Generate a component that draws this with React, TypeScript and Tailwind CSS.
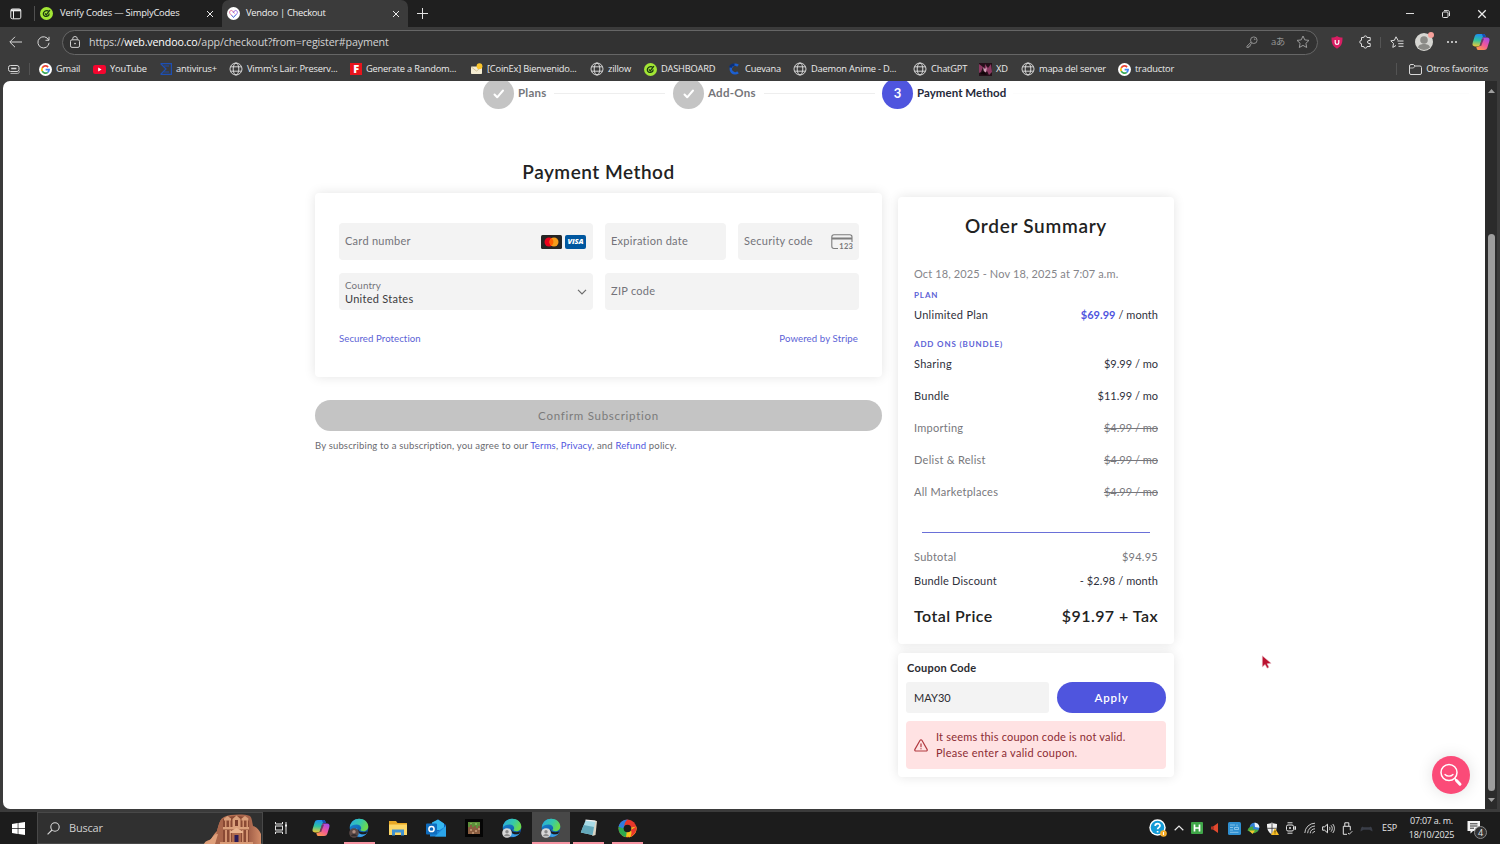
import type { ReactNode } from "react";
import clsx from "clsx";

const uiFont = "font-['Open_Sans','Noto_Sans',sans-serif]";
const pageFont = "font-['Lato',sans-serif]";

interface IconProps {
  className?: string;
}

function GlobeIcon() {
  return (
    <svg className="size-[14px] shrink-0" viewBox="0 0 14 14" fill="none" stroke="#e4e4e4" strokeWidth="0.9">
      <circle cx="7" cy="7" r="6" />
      <ellipse cx="7" cy="7" rx="2.8" ry="6" />
      <path d="M1.6 4.8h10.8M1.6 9.2h10.8" />
    </svg>
  );
}

function GoogleIcon() {
  return (
    <svg className="size-[13px] shrink-0" viewBox="0 0 13 13" fill="none">
      <circle cx="6.5" cy="6.5" r="6.5" fill="#fff" />
      <g strokeWidth="1.7">
        <path d="M9.1 4.1A3.6 3.6 0 0 0 3.3 4.8" stroke="#ea4335" />
        <path d="M3.3 4.8a3.6 3.6 0 0 0 0 3.4" stroke="#fbbc05" />
        <path d="M3.3 8.2a3.6 3.6 0 0 0 5.5 1.1" stroke="#34a853" />
        <path d="M8.8 9.3a3.6 3.6 0 0 0 1.3-2.6H6.6" stroke="#4285f4" />
      </g>
    </svg>
  );
}

function SimplyIcon() {
  return (
    <svg className="size-[13px] shrink-0" viewBox="0 0 13 13">
      <circle cx="6.5" cy="6.5" r="6.5" fill="#a3e635" />
      <path d="M9.9 3.2 6.3 7.8 4.9 6.5M8.4 3.9C5.6 3 3.2 4.6 3.3 7c.1 2 2.3 2.8 4 2.2 1.4-.5 1.9-1.5 1.9-2.7" fill="none" stroke="#1c3a12" strokeWidth="1.3" />
    </svg>
  );
}

function EdgeIcon() {
  return (
    <svg className="size-[20px]" viewBox="0 0 20 20">
      <defs>
        <linearGradient id="edgeTop" x1="0" y1="0" x2="1" y2="0.4">
          <stop offset="0" stopColor="#2aa8e8" />
          <stop offset="0.6" stopColor="#36c9a8" />
          <stop offset="1" stopColor="#6bd94c" />
        </linearGradient>
        <linearGradient id="edgeSide" x1="0" y1="0" x2="0.6" y2="1">
          <stop offset="0" stopColor="#1c8fdc" />
          <stop offset="1" stopColor="#0c4f9e" />
        </linearGradient>
      </defs>
      <circle cx="10" cy="10" r="9.3" fill="url(#edgeSide)" />
      <path d="M.8 9.2C1.5 4 5.3.7 10.2.7c5.2 0 9.1 3.5 9.1 7.7 0 3-2.3 4.8-5 4.8-1.8 0-2.9-.5-2.9-1.2 0-.6.8-.9.8-2.1 0-1.9-2-3.5-4.600-3.500C4.500 6.400 2 7.600.8 9.200z" fill="url(#edgeTop)" />
      <path d="M8.200 10c-.9 4.200 2.200 6.700 6 6.300 1.500-.1 2.800-.7 3.800-1.500-2.200 4.400-8 5.300-11.200 2.400C4.500 14.800 5.200 11.300 8.200 10z" fill="#3b9fe6" />
      <path d="M9 11c.3 2.800 4.200 4.300 9.200 2.600l-1.200 2.200c-4.500 1.700-8.600-.8-8-4.800z" fill="#1c1c1c" />
    </svg>
  );
}

function EdgeProfileIcon({ dark }: { dark?: boolean }) {
  return (
    <div className="relative">
      <EdgeIcon />
      <svg className="absolute bottom-0 left-0 size-[10px]" viewBox="0 0 10 10">
        <circle cx="5" cy="5" r="4.8" fill={dark ? "#5b4a48" : "#d8d8d8"} />
        <circle cx="5" cy="3.8" r="1.7" fill={dark ? "#b08d80" : "#8a8a8a"} />
        <path d="M2 8.2c.4-3 5.600-3 6 0z" fill={dark ? "#322c2e" : "#8a8a8a"} />
      </svg>
    </div>
  );
}

function CopilotIcon({ className }: IconProps) {
  return (
    <svg className={className} viewBox="0 0 20 20">
      <defs>
        <linearGradient id="copLeft" x1="0.3" y1="0" x2="0.2" y2="1">
          <stop offset="0" stopColor="#1d8df0" />
          <stop offset="0.5" stopColor="#2fc3a0" />
          <stop offset="1" stopColor="#f4c934" />
        </linearGradient>
        <linearGradient id="copRight" x1="0.8" y1="0" x2="0.2" y2="1">
          <stop offset="0" stopColor="#a54bea" />
          <stop offset="0.5" stopColor="#f0569b" />
          <stop offset="1" stopColor="#ff9a4a" />
        </linearGradient>
      </defs>
      <path d="M6.5 1h6.200c1 0 1.700.6 2 1.600l.5 1.900h-1.500c-1.500 0-2.300.7-2.700 2.100L9 13.200c-.4 1.100-1.100 1.700-2.200 1.700H3.300C1 14.900.1 13.500.7 11.200L2.900 3.800C3.500 1.900 4.600 1 6.500 1z" fill="url(#copLeft)" />
      <path d="M12.700 1c1 0 1.700.6 2 1.600l.5 1.900h-2.900L11 1z" fill="#174fb5" />
      <path d="M13.500 19H7.300c-1 0-1.700-.6-2-1.600l-.5-1.900h1.500c1.500 0 2.300-.7 2.700-2.100L11 6.800c.4-1.100 1.100-1.700 2.200-1.700h3.500c2.300 0 3.200 1.400 2.600 3.700l-2.200 7.400c-.6 1.900-1.700 2.800-3.600 2.800z" fill="url(#copRight)" />
      <path d="M11.300 6.200 13.400 6l-3.200 8.500H8.200z" fill="#2a2c3a" opacity="0.600" />
    </svg>
  );
}

function CloseIcon({ className = "size-[8px]" }: IconProps) {
  return (
    <svg className={className} viewBox="0 0 8 8" stroke="#ececec" strokeWidth="1">
      <path d="M1 1l6 6M7 1L1 7" />
    </svg>
  );
}

const bookmarks: { label: string; width: string; gap?: string; icon: ReactNode }[] = [
  { label: "Gmail", width: "w-[54px]", icon: <GoogleIcon /> },
  {
    label: "YouTube",
    width: "w-[67px]",
    icon: (
      <svg className="h-[9px] w-[13px] shrink-0" viewBox="0 0 13 9">
        <rect width="13" height="9" rx="2.2" fill="#f5062f" />
        <path d="M5.2 2.500v4l3.400-2z" fill="#fff" />
      </svg>
    ),
  },
  {
    label: "antivirus+",
    width: "w-[69px]",
    icon: (
      <svg className="size-[12px] shrink-0" viewBox="0 0 12 12" fill="none" stroke="#1d4fb4">
        <path d="M.6.6h10.800v10.800H.6M.6.6 6 6 .6 11.400" strokeWidth="1.200" />
        <path d="M3.500 3H9M3.500 9H9" strokeWidth="0.900" />
      </svg>
    ),
  },
  { label: "Vimm's Lair: Preserv...", width: "w-[121px]", icon: <GlobeIcon /> },
  {
    label: "Generate a Random...",
    width: "w-[121px]",
    icon: <span className="flex size-[12px] shrink-0 items-center justify-center bg-[#e8141c] text-[11px] font-extrabold text-white">F</span>,
  },
  {
    label: "[CoinEx] Bienvenido...",
    width: "w-[119px]",
    icon: (
      <svg className="size-[12px] shrink-0" viewBox="0 0 12 12">
        <rect y="3.500" width="11" height="7.500" rx="0.800" fill="#f4ecd2" />
        <path d="M.3 4l5.200 4 5.200-4" fill="none" stroke="#c9b98c" strokeWidth="0.800" />
        <circle cx="8.500" cy="3.200" r="2.900" fill="#fbc52b" />
      </svg>
    ),
  },
  { label: "zillow", width: "w-[54px]", icon: <GlobeIcon /> },
  { label: "DASHBOARD", width: "w-[84px]", icon: <SimplyIcon /> },
  {
    label: "Cuevana",
    width: "w-[65px]",
    gap: "gap-[5px]",
    icon: (
      <svg className="size-[12px] shrink-0" viewBox="0 0 12 12" fill="none">
        <path d="M10 2.800A4.300 4.300 0 1 0 10 9.200" stroke="#1c5fd0" strokeWidth="2.600" />
        <path d="M2.200 4.500A4.300 4.300 0 0 1 6.500 1.700" stroke="#0b2f78" strokeWidth="2.600" />
      </svg>
    ),
  },
  { label: "Daemon Anime - D...", width: "w-[120px]", icon: <GlobeIcon /> },
  { label: "ChatGPT", width: "w-[66px]", icon: <GlobeIcon /> },
  {
    label: "XD",
    width: "w-[42px]",
    icon: (
      <svg className="size-[13px] shrink-0" viewBox="0 0 13 13">
        <rect width="13" height="13" fill="#241019" />
        <path d="M0 1l4 3-2 5-2 1zM6 1l3 4 3-4 1 8-3 3-2-4-3 3z" fill="#8d3a63" />
        <path d="M4 4l2 2 2-2-1 5H5z" fill="#cfa3b8" />
        <path d="M1 11l4-3 3 4z" fill="#120509" />
      </svg>
    ),
  },
  { label: "mapa del server", width: "w-[97px]", icon: <GlobeIcon /> },
  { label: "traductor", width: "w-[60px]", icon: <GoogleIcon /> },
];

function TabBar() {
  return (
    <div className="flex h-[27px] items-center bg-[#1f1f1f] text-[9.400px] whitespace-nowrap text-[#efefef]">
      <div className="flex h-full w-[34px] items-center pl-[10px]">
        <svg className="size-[12px]" viewBox="0 0 12 12" fill="none" stroke="#eee">
          <rect x="0.800" y="1" width="10" height="9.800" rx="1.600" />
          <path d="M1 2.300h9.800" strokeWidth="2" />
          <path d="M3.500 3v7.500" />
        </svg>
      </div>
      <div className="flex h-full w-[188px] items-center">
        <div className="h-[15px] w-px bg-[#505050]" />
        <div className="ml-[5px]">
          <SimplyIcon />
        </div>
        <span className="ml-[7px] w-[146px] tracking-[-0.200px]">Verify Codes — SimplyCodes</span>
        <CloseIcon />
      </div>
      <div className="flex h-full w-[186px] items-center rounded-t-[7px] bg-[#3b3b3b] pl-[5px]">
        <svg className="size-[13px]" viewBox="0 0 13 13" fill="none">
          <circle cx="6.500" cy="6.500" r="6.500" fill="#fff" />
          <path d="M6.500 10.500 3 6.500C1.700 4.800 3.800 2.300 5.600 4L7.500 6.500" stroke="#e0709a" strokeWidth="1" />
          <path d="M6.500 10.500 10 6.500c1.300-1.700-.8-4.200-2.600-2.500L6 6" stroke="#9a6be0" strokeWidth="1" />
          <path d="M4.500 8.200 6.500 10.500 9 7.600" stroke="#5a8be8" strokeWidth="1" />
        </svg>
        <span className="ml-[6px] w-[146px] tracking-[-0.300px]">Vendoo | Checkout</span>
        <CloseIcon />
      </div>
      <svg className="ml-[9px] size-[11px]" viewBox="0 0 11 11" stroke="#e2e2e2">
        <path d="M0 5.500h11M5.500 0v11" />
      </svg>
      <div className="ml-auto flex items-center pr-[13px]">
        <div className="h-px w-[8px] bg-[#dcdcdc]" />
        <svg className="ml-[28px] size-[8px]" viewBox="0 0 8 8" fill="none" stroke="#e4e4e4">
          <rect x="0.500" y="2" width="5.500" height="5.500" rx="1" />
          <path d="M2 .6h3.800c1 0 1.700.7 1.700 1.700V6" />
        </svg>
        <CloseIcon className="ml-[27px] size-[10px]" />
      </div>
    </div>
  );
}

function Toolbar() {
  return (
    <div className="flex h-[30px] items-center bg-[#3b3b3b]">
      <svg className="ml-[9px] h-[12px] w-[13px]" viewBox="0 0 13 12" fill="none" stroke="#d8d8d8">
        <path d="M13 6H1M6 .8.800 6 6 11.200" />
      </svg>
      <svg className="ml-[15px] size-[13px]" viewBox="0 0 13 13" fill="none" stroke="#d8d8d8">
        <path d="M11.600 4A5.600 5.600 0 1 0 12.100 6.800M12 .8v3.500H8.500" />
      </svg>
      <div className="ml-[12px] flex h-[25px] w-[1256px] items-center rounded-full border border-[#666] bg-[#323232]">
        <svg className="ml-[7px] h-[12px] w-[10px]" viewBox="0 0 10 12" fill="none" stroke="#cfcfcf">
          <rect x="0.500" y="3.800" width="9" height="7.600" rx="1.500" />
          <path d="M2.700 3.500V2.800a2.300 2.300 0 0 1 4.600 0v.7" />
          <circle cx="5" cy="7.600" r="0.500" fill="#cfcfcf" />
        </svg>
        <span className="ml-[9px] whitespace-nowrap text-[10.700px] tracking-[-0.150px] text-[#d2d2d2]">
          https://<span className="text-white">web.vendoo.co</span>/app/checkout?from=register#payment
        </span>
        <svg className="ml-auto size-[12px]" viewBox="0 0 12 12" fill="none" stroke="#9a9a9a" strokeWidth="0.900" strokeLinejoin="round">
          <circle cx="7.800" cy="4.200" r="3.300" />
          <path d="M5 6.200.9 10.200v1.200h1.900v-1.200h1.400V9l1.800-1.800" />
          <circle cx="8.800" cy="3.200" r="0.400" />
        </svg>
        <span className="ml-[13px] w-[14px] text-[9.500px] tracking-[-0.500px] text-[#969696] font-['Open_Sans','Noto_Sans_CJK_JP',sans-serif]">aあ</span>
        <svg className="mr-[7px] ml-[11px] size-[14px]" viewBox="0 0 14 14" fill="none" stroke="#9a9a9a" strokeLinejoin="round">
          <path d="M7 1l1.800 3.900 4.200.500-3.100 2.900.8 4.200L7 10.400l-3.700 2.100.8-4.200L1 5.400l4.200-.500z" />
        </svg>
      </div>
      <svg className="ml-[13px] h-[13px] w-[12px]" viewBox="0 0 12 13">
        <path d="M6 0c1.500 1.200 3.500 1.600 5.500 1.600 0 5-.5 8.400-5.500 11.200C1 10 .5 6.600.5 1.600 2.500 1.600 4.500 1.200 6 0z" fill="#d81e63" />
        <path d="M4.200 4v2.700c0 2.300 3.600 2.300 3.600 0V4" fill="none" stroke="#fff" strokeWidth="1.200" />
      </svg>
      <svg className="ml-[15px] size-[14px]" viewBox="0 0 14 14" fill="none" stroke="#dedede" strokeLinejoin="round">
        <path d="M3.500 2.500h2.300a1.600 1.600 0 0 1 3.200 0h3.200v3H11a1.500 1.500 0 0 0 0 3h1.200v3H9a1.600 1.600 0 0 1-3.200 0H3.500V8.700a1.700 1.700 0 0 1 0-3.400z" />
      </svg>
      <div className="ml-[8px] h-[11px] w-px bg-[#555]" />
      <svg className="ml-[9px] h-[13px] w-[14px]" viewBox="0 0 14 13" fill="none" stroke="#dedede" strokeLinejoin="round">
        <path d="M8 4.300 6 .8 4.400 4.300.800 4.800l2.700 2.600-.7 4L6 9.500M7.500 5h6M8.200 7.700h5.300M8.500 10.300h5" />
      </svg>
      <div className="relative ml-[11px] flex size-[18px] items-center justify-center rounded-full bg-[#d6d6d2]">
        <svg className="size-[18px]" viewBox="0 0 18 18" fill="#8a8a86">
          <circle cx="9" cy="7" r="3.800" />
          <path d="M3 14.500c.5-4.600 11.500-4.600 12 0A8.500 8.500 0 0 1 3 14.500z" />
        </svg>
        <div className="absolute -top-px -right-px size-[6px] rounded-full bg-[#f7a19b]" />
      </div>
      <div className="ml-[14px] flex gap-[2px]">
        <i className="size-[2px] rounded-full bg-[#e8e8e8]" />
        <i className="size-[2px] rounded-full bg-[#e8e8e8]" />
        <i className="size-[2px] rounded-full bg-[#e8e8e8]" />
      </div>
      <CopilotIcon className="ml-[15px] size-[18px] shrink-0" />
    </div>
  );
}

function BookmarksBar() {
  return (
    <div className="flex h-[24px] items-center bg-[#3b3b3b] text-[9.300px] tracking-[-0.200px] whitespace-nowrap text-[#ebebeb]">
      <svg className="ml-[8px] h-[9px] w-[12px]" viewBox="0 0 12 9" fill="none" stroke="#d8d8d8">
        <rect x="0.500" y="0.500" width="10.500" height="6" rx="2" />
        <path d="M3.200 3.500h5.200" strokeWidth="1.600" />
        <path d="M2.500 8.400h7c1.200 0 2-1 2-2" strokeWidth="0.800" />
      </svg>
      <div className="mr-[9px] ml-[9px] h-[12px] w-px bg-[#535353]" />
      {bookmarks.map((b) => (
        <div key={b.label} className={clsx("flex shrink-0 items-center", b.gap ?? "gap-[4px]", b.width)}>
          {b.icon}
          <span>{b.label}</span>
        </div>
      ))}
      <div className="ml-auto h-[12px] w-px bg-[#535353]" />
      <svg className="ml-[12px] h-[11px] w-[13px]" viewBox="0 0 13 11" fill="none" stroke="#d8d8d8">
        <path d="M.5 2A1.500 1.500 0 0 1 2 .5h2.500l1.500 1.500H11A1.500 1.500 0 0 1 12.500 3.500V9A1.500 1.500 0 0 1 11 10.500H2A1.500 1.500 0 0 1 .5 9z" />
        <path d="M.5 4h4l1.500-2" strokeWidth="0.800" />
      </svg>
      <span className="mr-[12px] ml-[4px]">Otros favoritos</span>
    </div>
  );
}

function StepDone() {
  return (
    <div className="flex size-[31px] shrink-0 items-center justify-center rounded-full bg-[#c4c4c4]">
      <svg className="h-[10px] w-[12px]" viewBox="0 0 12 10" fill="none" stroke="#fff" strokeWidth="2" strokeLinecap="round" strokeLinejoin="round">
        <path d="M1.500 5.500 4.200 8.300 10 1.500" />
      </svg>
    </div>
  );
}

function Stepper() {
  return (
    <div className="-mt-[3px] flex h-[31px] items-center pl-[480px] text-[11.500px] font-bold whitespace-nowrap text-[#75757a]">
      <StepDone />
      <span className="-mt-px ml-[4px] w-[36px] tracking-[0.250px]">Plans</span>
      <div className="h-px w-[111px] bg-[#eeeeee]" />
      <div className="ml-[8px]">
        <StepDone />
      </div>
      <span className="-mt-px ml-[4px] w-[56px] tracking-[0.250px]">Add-Ons</span>
      <div className="h-px w-[111px] bg-[#eeeeee]" />
      <div className="ml-[7px] flex size-[31px] shrink-0 items-center justify-center rounded-full bg-[#4f55de] text-[13px] text-white">3</div>
      <span className="-mt-px ml-[4px] w-[96px] tracking-[0.050px] text-[#25293a]">Payment Method</span>
      <div className="h-px w-[456px] bg-[#fcfcfc]" />
    </div>
  );
}

const field = "flex h-[37px] shrink-0 items-center rounded-[4px] bg-[#f3f3f3] px-[6px] text-[11px] tracking-[0.270px] text-[#73737a]";

function PaymentForm() {
  return (
    <div className="w-[567px]">
      <h1 className="mt-[49px] h-[29px] text-center text-[19px] leading-[28px] font-semibold tracking-[0.500px] text-[#222]">Payment Method</h1>
      <div className="mt-[6px] h-[184px] rounded-[4px] bg-white pt-[30px] pr-[23px] pl-[24px] shadow-[0_0_12px_rgba(0,0,0,0.11)]">
        <div className="flex gap-[12px]">
          <div className={clsx(field, "w-[254px]")}>
            <span>Card number</span>
            <div className="mr-px ml-auto flex gap-[3px]">
              <svg className="h-[14px] w-[21px]" viewBox="0 0 21 14">
                <rect width="21" height="14" rx="1.500" fill="#252525" />
                <circle cx="8" cy="7" r="4.500" fill="#eb001b" />
                <circle cx="13" cy="7" r="4.500" fill="#f79e1b" />
                <path d="M10.500 3.300a4.500 4.500 0 0 1 0 7.400 4.500 4.500 0 0 1 0-7.400z" fill="#ff5f00" />
              </svg>
              <span className="flex h-[14px] w-[21px] items-center justify-center rounded-[2px] bg-[#00579f] text-[7.500px] font-black italic tracking-[-0.100px] text-white font-['Open_Sans',sans-serif]">
                VISA
              </span>
            </div>
          </div>
          <div className={clsx(field, "w-[121px]")}>Expiration date</div>
          <div className={clsx(field, "w-[121px]")}>
            <span className="whitespace-nowrap">Security code</span>
            <div className="relative ml-auto h-[16px] w-[22px]">
              <svg className="h-[16px] w-[22px]" viewBox="0 0 22 16" fill="none" stroke="#7d7d7d">
                <path d="M7 14.500H3A2.200 2.200 0 0 1 .8 12.300V3A2.200 2.200 0 0 1 3 .8h15.800A2.200 2.200 0 0 1 21 3v5" strokeWidth="1.100" />
                <path d="M.8 4.600H21" strokeWidth="2" />
              </svg>
              <span className="absolute right-0 -bottom-[1px] text-[7.500px] leading-[8px] font-bold tracking-[0.200px] text-[#777]">123</span>
            </div>
          </div>
        </div>
        <div className="mt-[13px] flex gap-[12px]">
          <div className={clsx(field, "w-[254px] justify-between")}>
            <div className="flex flex-col leading-[13px]">
              <span className="text-[9.800px] tracking-[0.150px]">Country</span>
              <span className="text-[#3c3c40]">United States</span>
            </div>
            <svg className="h-[6px] w-[10px]" viewBox="0 0 10 6" fill="none" stroke="#6c6c6c" strokeWidth="1.200">
              <path d="M1 .8l4 4 4-4" />
            </svg>
          </div>
          <div className={clsx(field, "w-[254px]")}>ZIP code</div>
        </div>
        <div className="mt-[22px] flex justify-between pr-px text-[9.600px] leading-[14px] tracking-[0.120px] text-[#5c62d6]">
          <span className="tracking-[0.080px]">Secured Protection</span>
          <span>Powered by Stripe</span>
        </div>
      </div>
      <button className="mt-[23px] flex h-[31px] w-full items-center justify-center rounded-full bg-[#c4c4c4] text-[11.500px] tracking-[0.720px] text-[#7b7b7b]">
        Confirm Subscription
      </button>
      <p className="mt-[8px] text-[9.500px] leading-[14px] tracking-[0.170px] whitespace-nowrap text-[#6a6a6f]">
        By subscribing to a subscription, you agree to our <a className="text-[#4f55de]">Terms</a>, <a className="text-[#4f55de]">Privacy</a>, and{" "}
        <a className="text-[#4f55de]">Refund</a> policy.
      </p>
    </div>
  );
}

const addOns = [
  { name: "Sharing", price: "$9.99 / mo", included: false },
  { name: "Bundle", price: "$11.99 / mo", included: false },
  { name: "Importing", price: "$4.99 / mo", included: true },
  { name: "Delist & Relist", price: "$4.99 / mo", included: true },
  { name: "All Marketplaces", price: "$4.99 / mo", included: true },
];

function OrderSummary() {
  return (
    <div className="mt-[88px] ml-[16px] w-[276px]">
      <div className="h-[447px] rounded-[4px] bg-white px-[16px] text-[11px] leading-[20px] tracking-[0.270px] text-[#2f313c] shadow-[0_0_12px_rgba(0,0,0,0.11)]">
        <h2 className="h-[58px] text-center text-[19px] leading-[57px] font-semibold tracking-[0.700px] text-[#222]">Order Summary</h2>
        <div className="mt-[9px] tracking-[0.120px] text-[#85858a]">Oct 18, 2025 - Nov 18, 2025 at 7:07 a.m.</div>
        <div className="mt-px text-[8px] font-bold tracking-[0.900px] text-[#5c62d6]">PLAN</div>
        <div className="flex justify-between">
          <span>Unlimited Plan</span>
          <span className="tracking-[0.050px]">
            <b className="text-[#4f55de]">$69.99</b> / month
          </span>
        </div>
        <div className="mt-[9px] text-[8px] font-bold tracking-[0.860px] text-[#5c62d6]">ADD ONS (BUNDLE)</div>
        <div className="flex flex-col gap-[12px]">
          {addOns.map((a) => (
            <div key={a.name} className={clsx("flex justify-between", a.included && "text-[#77777c]")}>
              <span>{a.name}</span>
              <span className={clsx(a.included && "line-through", "tracking-[0.010px]")}>{a.price}</span>
            </div>
          ))}
        </div>
        <div className="mx-[8px] mt-[30px] h-px bg-[#6a70d8]" />
        <div className="mt-[14px] flex justify-between text-[#77777c]">
          <span>Subtotal</span>
          <span>$94.95</span>
        </div>
        <div className="mt-[4px] flex justify-between">
          <span className="tracking-[0.200px]">Bundle Discount</span>
          <span className="tracking-[0.080px]">- $2.98 / month</span>
        </div>
        <div className="mt-[10px] flex justify-between text-[16px] leading-[30px] font-semibold tracking-[0.450px] text-[#222]">
          <span>Total Price</span>
          <span>$91.97 + Tax</span>
        </div>
      </div>
      <div className="mt-[9px] h-[124px] rounded-[4px] bg-white px-[8px] pt-[5px] shadow-[0_0_12px_rgba(0,0,0,0.11)]">
        <div className="pl-px text-[11px] leading-[20px] font-bold tracking-[0.250px] text-[#2b2b31]">Coupon Code</div>
        <div className="mt-[4px] flex gap-[8px]">
          <div className="flex h-[31px] w-[143px] items-center rounded-[3px] bg-[#f3f3f3] pt-px pl-[8px] text-[11px] tracking-[0.050px] text-[#2b2b30]">MAY30</div>
          <button className="h-[31px] w-[109px] rounded-full bg-[#4f55de] text-[11.500px] font-semibold tracking-[0.900px] text-white">Apply</button>
        </div>
        <div className="mt-[8px] flex h-[48px] items-center rounded-[4px] bg-[#ffe2e3] pl-[8px] text-[11px] leading-[16px] tracking-[0.190px] text-[#8c2c33]">
          <svg className="mr-[8px] h-[13px] w-[14px]" viewBox="0 0 14 13" fill="none" stroke="#b23a41" strokeWidth="1.200" strokeLinejoin="round" strokeLinecap="round">
            <path d="M6.100 1.300.9 10.400c-.4.700.1 1.600.9 1.600h10.400c.8 0 1.300-.9.9-1.600L7.900 1.300c-.4-.7-1.400-.7-1.800 0zM7 4.800v2.900M7 9.700v.1" />
          </svg>
          <div>
            <p>It seems this coupon code is not valid.</p>
            <p className="tracking-[0.270px]">Please enter a valid coupon.</p>
          </div>
        </div>
      </div>
    </div>
  );
}

function Scrollbar() {
  return (
    <div className="flex w-[12px] flex-col items-center bg-[#2b2b2b]">
      <svg className="mt-[8px] h-[4px] w-[7px]" viewBox="0 0 7 4">
        <path d="M3.500 0 7 4H0z" fill="#a0a0a0" />
      </svg>
      <div className="mt-[141px] h-[557px] w-[7px] rounded-full bg-[#9d9d9d]" />
      <svg className="mt-[7px] h-[4px] w-[7px]" viewBox="0 0 7 4">
        <path d="M3.500 4 7 0H0z" fill="#a0a0a0" />
      </svg>
    </div>
  );
}

const tasks: { id: string; icon: ReactNode; state?: "open" | "active" }[] = [
  { id: "copilot", icon: <CopilotIcon className="size-[18px]" /> },
  { id: "edge-1", icon: <EdgeProfileIcon dark />, state: "open" },
  {
    id: "explorer",
    icon: (
      <svg className="h-[16px] w-[18px]" viewBox="0 0 18 16">
        <path d="M0 1h7l1.500 2H18v12H0z" fill="#e8a825" />
        <path d="M0 4.500h18V15H0z" fill="#fcd768" />
        <path d="M3 15.500V9.500h12v6h-3v-3H6v3z" fill="#3f92d2" />
      </svg>
    ),
  },
  {
    id: "outlook",
    icon: (
      <svg className="h-[18px] w-[20px]" viewBox="0 0 20 18">
        <path d="M4 6l8-5.500L20 6v11H4z" fill="#1160b7" />
        <path d="M6 3.500 12 .500l6 4V11H6z" fill="#35b8f1" />
        <path d="M4 7l8 5 8-5v10.500H4z" fill="#1a84d8" />
        <path d="M20 7v10.500H9z" fill="#2ba5ea" />
        <rect y="4.500" width="11" height="11" rx="1" fill="#0f6cbd" />
        <circle cx="5.500" cy="10" r="2.600" fill="none" stroke="#fff" strokeWidth="1.500" />
      </svg>
    ),
  },
  {
    id: "minecraft",
    icon: (
      <svg className="size-[18px]" viewBox="0 0 18 18">
        <rect width="18" height="18" fill="#050505" />
        <rect x="3" y="3" width="12" height="12" fill="#8a5d40" />
        <path d="M3 3h12v4h-2v2h-2V7H9v1H7V6H5v2H3z" fill="#5d8f3a" />
        <path d="M5 10h2v2H5zM10 11h2v2h-2zM13 9h2v2h-2zM7 13h2v2H7z" fill="#b98d6c" />
        <path d="M5 4h2v1H5zM10 4h2v2h-2z" fill="#7fb356" />
      </svg>
    ),
  },
  { id: "edge-2", icon: <EdgeProfileIcon /> },
  { id: "edge-3", icon: <EdgeProfileIcon />, state: "active" },
  {
    id: "notepad",
    icon: (
      <svg className="h-[18px] w-[18px]" viewBox="0 0 18 18">
        <path d="M6 1l11 1-1.500 14-3 1z" fill="#d9d4c4" />
        <path d="M5.500 1.500 15.500 2.500 12.500 16 .8 13.500z" fill="#a9dbe6" />
        <path d="M3.600 6 14 8l-1.500 8L.8 13.500z" fill="#64a9bb" />
        <path d="M5.500 1.200l10 1" stroke="#f2f2f2" strokeWidth="1.200" />
      </svg>
    ),
    state: "open",
  },
  {
    id: "swirl",
    icon: (
      <svg className="size-[19px]" viewBox="0 0 19 19">
        <circle cx="9.500" cy="9.500" r="9" fill="#e8372c" />
        <path d="M9.500 9.500 18.300 7.500A9 9 0 0 1 11 18.400z" fill="#f7c21b" />
        <path d="M18.300 7.500c.8 4-1.500 8.500-6 10.500 1.500-3 1.500-5.500.5-7z" fill="#e8372c" />
        <path d="M13 16.800A9 9 0 0 1 4 16.600l5.500-7z" fill="#f7c21b" />
        <path d="M8 18.300A9 9 0 0 1 .8 7l4-.5 4 6z" fill="#2daa4e" />
        <path d="M.6 8C1.200 3.500 5 .5 9.800.5 7 2.500 6 5 6.500 8l-2 1.500C3.500 8.500 2 8 .6 8z" fill="#2f7de1" />
        <circle cx="9.500" cy="9.500" r="3.800" fill="#1c1c1c" />
      </svg>
    ),
    state: "open",
  },
];

const trayIcons: { id: string; width: string; icon: ReactNode }[] = [
  {
    id: "help",
    width: "w-[24px]",
    icon: (
      <svg className="size-[18px]" viewBox="0 0 18 18">
        <circle cx="8.500" cy="8.500" r="8.200" fill="#fff" />
        <circle cx="8.500" cy="8.500" r="6.800" fill="#149bd7" />
        <path d="M6.200 7c0-3.200 4.800-3.100 4.800-.3 0 1.700-2.400 1.700-2.400 3.600M8.600 12v1.500" fill="none" stroke="#fff" strokeWidth="1.700" />
        <circle cx="14.500" cy="14.500" r="3.300" fill="#f4ae2c" />
        <path d="M14.500 13v3" stroke="#fff" />
      </svg>
    ),
  },
  {
    id: "caret",
    width: "w-[18px]",
    icon: (
      <svg className="h-[6px] w-[10px]" viewBox="0 0 10 6" fill="none" stroke="#e8e8e8" strokeWidth="1.200">
        <path d="M.7 5.200 5 1l4.300 4.200" />
      </svg>
    ),
  },
  {
    id: "h",
    width: "w-[18px]",
    icon: (
      <svg className="size-[12px]" viewBox="0 0 12 12">
        <rect width="12" height="12" rx="1" fill="#3fa648" />
        <path d="M3.500 2.500v7M8.500 2.500v7M3.500 6h5" stroke="#fff" strokeWidth="1.700" />
      </svg>
    ),
  },
  {
    id: "speaker",
    width: "w-[18px]",
    icon: (
      <svg className="h-[10px] w-[8px]" viewBox="0 0 8 10">
        <path d="M0 5 7 0v10z" fill="#e2492f" />
        <path d="M0 3.500h3v3H0z" fill="#b23322" />
      </svg>
    ),
  },
  {
    id: "panel",
    width: "w-[20px]",
    icon: (
      <svg className="size-[13px]" viewBox="0 0 13 13" fill="none" stroke="#a9d8f5" strokeWidth="0.700">
        <rect width="13" height="13" rx="1.500" fill="#2f8fd0" stroke="none" />
        <path d="M2 3h5M2 5.500h3M6.500 5.500h4v2h-4zM2 8h3M2 10.300h8.500M9 2.500v2" />
      </svg>
    ),
  },
  {
    id: "idm",
    width: "w-[18px]",
    icon: (
      <svg className="size-[13px]" viewBox="0 0 13 13">
        <circle cx="7.500" cy="5.500" r="4.800" fill="#2f7fd6" />
        <path d="M7.500 .7c3 0 5 2.200 4.800 5L8 5z" fill="#e9f3fb" />
        <path d="M.5 8.500C1 5.500 4 4 6.500 4.500L6 7l5.500 1c-1 2.500-4 3.500-6 3z" fill="#49a83d" />
        <path d="M2 8.500h6l-2.500 3.500z" fill="#f1c62d" />
      </svg>
    ),
  },
  {
    id: "shield",
    width: "w-[20px]",
    icon: (
      <svg className="size-[13px]" viewBox="0 0 13 13">
        <path d="M6 .5c1.500 1 3 1.400 5 1.500 0 5-.8 8-5 10.300C1.800 10 1 7 1 2 3 1.900 4.500 1.500 6 .5z" fill="#f2f2f2" />
        <path d="M6 1v11M1.200 6.300h9.500" stroke="#333" strokeWidth="0.800" />
        <path d="M9 6.200 13 13H5z" fill="#f8be26" />
        <path d="M9 8.500v2.200M9 11.500v.7" stroke="#3a2c00" strokeWidth="0.900" />
      </svg>
    ),
  },
  {
    id: "camera",
    width: "w-[18px]",
    icon: (
      <svg className="size-[12px]" viewBox="0 0 12 12" fill="none" stroke="#e4e4e4">
        <rect x="1.500" y="3" width="7" height="6" rx="1.500" />
        <circle cx="5" cy="6" r="0.700" />
        <path d="M8.500 5.500l2-1v3l-2-1M2.500 .8h5M2.500 11.200h5" />
      </svg>
    ),
  },
  {
    id: "wifi",
    width: "w-[20px]",
    icon: (
      <svg className="size-[12px]" viewBox="0 0 12 12" fill="none" stroke="#c8c8c8" strokeWidth="1">
        <path d="M.8 11A10.200 10.200 0 0 1 11 1.200M3.600 11.200A7.600 7.600 0 0 1 11 4M6.200 11.300A5 5 0 0 1 11 6.800M8.600 11.300A2.600 2.600 0 0 1 11 9.400" />
      </svg>
    ),
  },
  {
    id: "volume",
    width: "w-[17px]",
    icon: (
      <svg className="h-[11px] w-[13px]" viewBox="0 0 13 11" fill="none" stroke="#e4e4e4">
        <path d="M.6 3.800h2L5.500 1.200v8.600L2.600 7.200h-2z" />
        <path d="M7.300 3.800c.8 1 .8 2.400 0 3.400M9 2.300c1.700 1.900 1.700 4.500 0 6.400M10.700 1c2.300 2.600 2.300 6.400 0 9" strokeWidth="0.900" />
      </svg>
    ),
  },
  {
    id: "usb",
    width: "w-[20px]",
    icon: (
      <svg className="h-[13px] w-[11px]" viewBox="0 0 11 13" fill="none" stroke="#e4e4e4">
        <path d="M2.800 4V.8h4V4M5 12.300H1.300V4.300h7v4" />
        <path d="M6 11l1.300 1.200 3-3" strokeWidth="0.900" />
      </svg>
    ),
  },
  {
    id: "gamepad",
    width: "w-[18px]",
    icon: (
      <svg className="h-[7px] w-[13px]" viewBox="0 0 13 7">
        <path d="M.5 6.500C.8 2 2 1 3.500 2.200h6C11 1 12.200 2 12.500 6.500L9.500 4.800h-6z" fill="#3a3e48" />
      </svg>
    ),
  },
];

function PetraIcon() {
  return (
    <svg className="ml-auto h-[31px] w-[59px]" viewBox="0 0 59 31">
      <defs>
        <linearGradient id="rock" x1="0" y1="0" x2="1" y2="0">
          <stop offset="0" stopColor="#e3a27b" />
          <stop offset="0.35" stopColor="#b87253" />
          <stop offset="0.8" stopColor="#a5624a" />
          <stop offset="1" stopColor="#d38c68" />
        </linearGradient>
      </defs>
      <path d="M1 31c2-4 4-3 7-5 2-3 3-5 6-8 2-7 3-12 7-14 7-3 20-3 26-1 2 2 2 6 3 10 4 1 6 4 8 8v10z" fill="url(#rock)" />
      <path d="M14 18c2-7 3-12 6-13v26h-8z" fill="#a9654a" />
      <path d="M8 26c2-3 4-5 7-5l-3 10H3z" fill="#dfa07b" />
      <path d="M20 6c6-4 20-4 26 0v25H20z" fill="#8a4a34" />
      <path d="M20 14h26v2.500H20zM21 5.500 24.500 3 28 5.500v2h-7zM38.500 5.500 42 3l3.500 2.500v2h-7zM29.500 6l4-3.500 4 3.500v8h-8z" fill="#dba07b" />
      <path d="M22 7h1.500v7H22zM26 7h1.500v7H26zM39.500 7H41v7h-1.500zM43.500 7H45v7h-1.500zM22 17h2v14h-2zM26.500 17h1.500v14h-1.500zM39 17h1.500v14H39zM43 17h2v14h-2z" fill="#d39370" />
      <path d="M32 7h3v6h-3z" fill="#7d3f2d" />
      <path d="M27 18.500 33.500 15l6.500 3.500v1.500H27z" fill="#eab48e" />
      <path d="M29 20h9v11h-9z" fill="#b06c4e" />
      <path d="M31.500 22h4v7h-4z" fill="#2a1c58" />
      <path d="M17 29h33v2H17z" fill="#d99b76" />
    </svg>
  );
}

function Taskbar() {
  return (
    <div className="flex h-[32px] items-center bg-[#1c1c1c] text-[#e6e6e6]">
      <div className="flex w-[37px] justify-center">
        <svg className="size-[13px]" viewBox="0 0 13 13" fill="#fff">
          <path d="M0 1.900 5.700 1.100v5H0zM6.400 1 13 0v6.100H6.400zM0 6.800h5.700v5.100L0 11.100zM6.400 6.800H13V13l-6.600-1z" />
        </svg>
      </div>
      <div className="flex h-full w-[226px] items-center border border-[#484848] bg-[#303030] pl-[9px]">
        <svg className="size-[13px] shrink-0" viewBox="0 0 13 13" fill="none" stroke="#d8d8d8" strokeWidth="1.100">
          <circle cx="8" cy="5" r="4.200" />
          <path d="M5 8 .6 12.400" />
        </svg>
        <span className="ml-[9px] text-[11px] tracking-[-0.200px] text-[#cfcfcf]">Buscar</span>
        <PetraIcon />
      </div>
      <div className="flex w-[39px] justify-center pr-[3px]">
        <svg className="h-[12px] w-[14px]" viewBox="0 0 14 12" fill="none" stroke="#e6e6e6">
          <path d="M1.500 0v2h7V0M1.500 12v-2h7v2" />
          <rect x="1.500" y="4" width="7" height="4" />
          <path d="M12 0v12" />
          <path d="M11 3.500h2" strokeWidth="2" />
        </svg>
      </div>
      {tasks.map((t) => (
        <div key={t.id} className={clsx("flex h-full w-[38.250px] flex-col items-center", t.state === "active" && "bg-[#484848]")}>
          <div className="flex h-[30px] items-center pt-[2px]">{t.icon}</div>
          {t.state && <div className={clsx("h-[2px] bg-[#f594a2]", t.state === "active" ? "w-full" : "w-[31px]")} />}
        </div>
      ))}
      <div className="ml-auto flex items-center">
        {trayIcons.map((t) => (
          <div key={t.id} className={clsx("flex justify-center", t.width)}>
            {t.icon}
          </div>
        ))}
        <span className="w-[29px] text-center text-[9px] tracking-[-0.200px]">ESP</span>
        <div className="w-[55px] text-center text-[9px] leading-[14px] tracking-[-0.250px] whitespace-nowrap">
          07:07 a. m.
          <br />
          18/10/2025
        </div>
        <div className="relative mr-[13px] ml-[8px] h-[20px] w-[20px]">
          <svg className="mt-px h-[15px] w-[14px]" viewBox="0 0 14 15">
            <path d="M.5 2h12.500v10H6l-2.500 2.500V12h-3z" fill="#f2f2f2" />
            <path d="M3 4.800h7.500M3 7h7.500M3 9.200h4" stroke="#1c1c1c" strokeWidth="0.900" />
          </svg>
          <span className="absolute right-0 -bottom-px flex size-[13px] items-center justify-center rounded-full border border-[#8a8a8a] bg-[#333] text-[9px] leading-none">4</span>
        </div>
      </div>
    </div>
  );
}

export default function App() {
  return (
    <div className={clsx("relative h-[844px] w-[1500px] overflow-hidden bg-[#3b3b3b]", uiFont)}>
      <TabBar />
      <Toolbar />
      <BookmarksBar />
      <div className="flex h-[731px] pl-[3px]">
        <main className={clsx("h-[728px] w-[1482px] overflow-hidden rounded-l-[7px] bg-white", pageFont)}>
          <Stepper />
          <div className="flex pl-[312px]">
            <PaymentForm />
            <OrderSummary />
          </div>
        </main>
        <div className="flex h-[728px]">
          <Scrollbar />
        </div>
      </div>
      <Taskbar />

      {/* support bubble and pointer float above the page */}
      <div className="absolute top-[756px] left-[1432px] flex size-[38px] items-center justify-center rounded-full bg-[#fb4b78] shadow-[0_0_16px_rgba(0,0,0,0.12)]">
        <svg className="size-[24px]" viewBox="0 0 24 24" fill="none" stroke="#fff" strokeLinecap="round">
          <circle cx="10" cy="9.500" r="8" strokeWidth="1.500" />
          <path d="M6 11.500c2 2.200 6 2.200 8 0" strokeWidth="1.300" />
          <path d="M15.800 15.500l1.500 1.500" strokeWidth="1.500" />
          <path d="M17.500 17.500l3.500 3.700" strokeWidth="3" />
        </svg>
      </div>
      <svg className="absolute top-[655px] left-[1261px] h-[14px] w-[11px]" viewBox="0 0 11 15">
        <path d="M1 .8v12l3-2.600 2.200 4 2-1-2-3.800 4.300-.6z" fill="#bb1230" stroke="#e9c6cc" strokeWidth="0.600" />
      </svg>
    </div>
  );
}
